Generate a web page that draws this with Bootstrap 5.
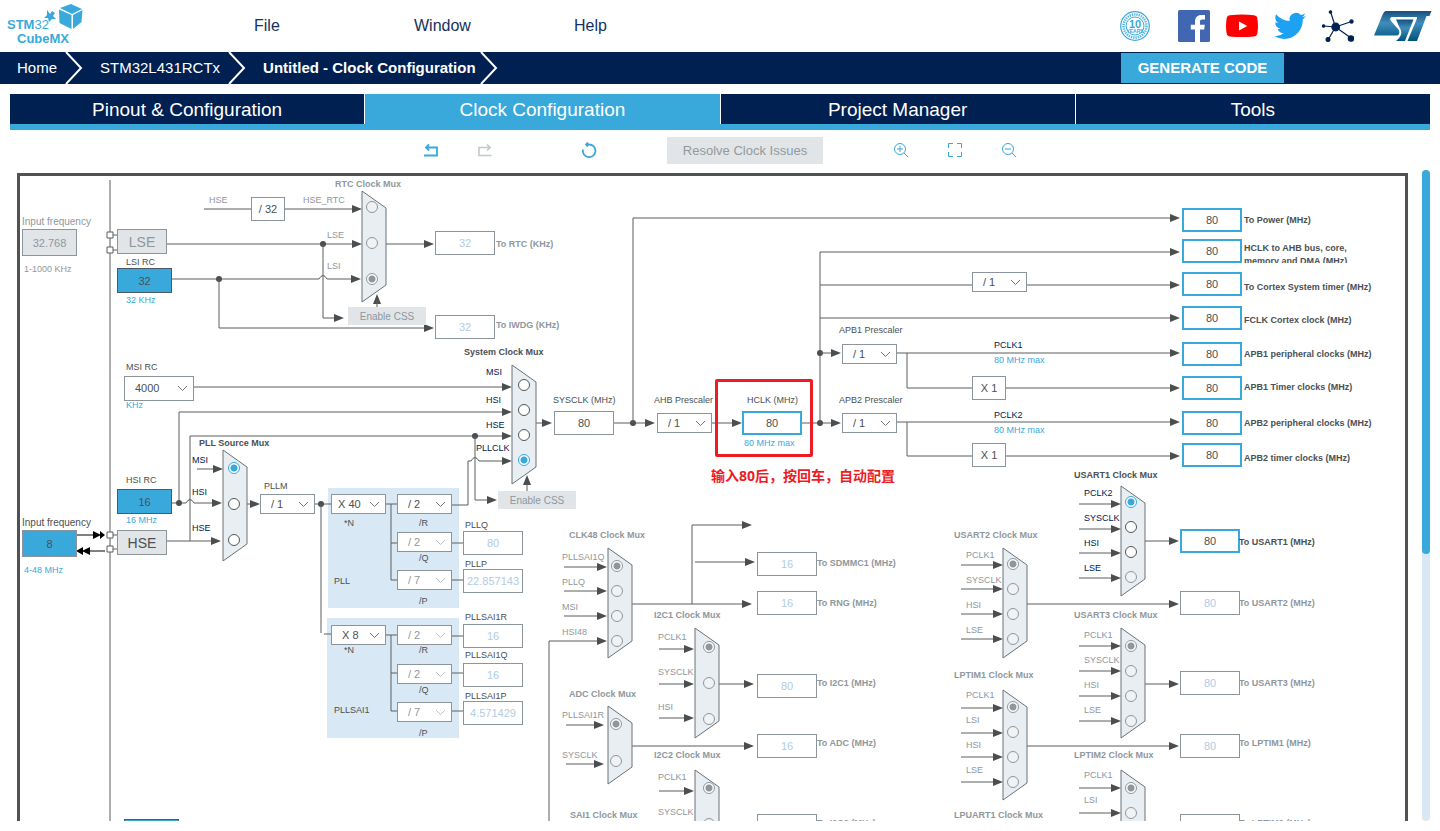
<!DOCTYPE html>
<html lang="en">
<head>
<meta charset="utf-8">
<meta name="viewport" content="width=device-width, initial-scale=1">
<title>STM32CubeMX - Clock Configuration</title>
<link href="https://cdn.jsdelivr.net/npm/bootstrap@5.3.0/dist/css/bootstrap.min.css" rel="stylesheet">
<style>
  :root { --navy:#002052; --sky:#39a9dc; --line:#4f5352; --edge:#8c959c; --pale:#e1e5e8; --wash:#d9e8f5; }
  body { font-family:"Liberation Sans", Arial, sans-serif; color:#4a5053; background:#fff; }
  button, select, input, label, output { font-family:inherit; }

  .topbar { height:52px; }
  .menu-link { width:160px; font-size:16px; line-height:24px; color:#16305f; text-decoration:none; }
  .brand-cell { width:254px; }
  .social { gap:16px; }

  .trail { height:32px; background:var(--navy); color:#fff; font-size:15px; }
  .trail a { color:#fff; text-decoration:none; padding:0 8px 0 17px; }
  .trail a.here { padding-right:4px; }
  .btn-generate { height:30px; width:163px; margin-right:156px; padding:0; border:0; border-radius:0; background:var(--sky); color:#fff; font-size:15px; font-weight:700; }

  .tabs { margin:10px 10px 0; border-bottom:6px solid var(--sky); }
  .tabs button { height:30px; padding:0; border:0; border-left:1px solid #fff; background:var(--navy); color:#fff; font-size:19px; line-height:32px; }
  .tabs button:first-child { border-left:0; }
  .tabs button.active { background:var(--sky); }

  .tools { height:40px; gap:38px; }
  .tools .reset { margin-left:50px; }
  .tools .btn-resolve { margin:0 32px; }
  .tool { width:16px; height:16px; padding:0; border:0; background:none; display:flex; color:var(--sky); }
  .tool:disabled { color:#c4c8cb; }
  .btn-resolve { width:156px; height:27px; padding:2px 0 0; border:0; background:var(--pale); color:#93999e; font-size:13px; }

  .workspace { min-height:0; gap:10px; padding:0 10px 10px 0; }
  .sheet { min-width:0; }
  .frame-edge { position:absolute; inset:3px 4px 0 17px; border:3px solid var(--line); border-bottom:0; }
  .wires { position:absolute; left:0; top:0; }
  .rail { width:8px; border-radius:4px; background:var(--wash); }
  .thumb { height:59%; border-radius:4px; background:var(--sky); }

  .n { position:absolute; margin:0; padding:0; }
  .cap { font-size:9px; line-height:12px; white-space:nowrap; }
  .cap.field { font-size:10px; }
  .cap.b { font-weight:700; }
  .cap.off { color:#8f979c; }
  .cap.blue { color:var(--sky); }
  .cap.navy { color:var(--navy); }
  .cap.two { white-space:normal; line-height:13px; overflow:hidden; }
  .box { border:1px solid var(--edge); border-radius:0; background:#fff; color:#4a5053; font-size:11px; line-height:18px; text-align:center; }
  .box.off { color:#b3cbe3; }
  .box.hot { border:2px solid var(--sky); }
  .box.src { background:var(--sky); border-color:#4a5b66; }
  .box.ext { background:var(--sky); }
  .box.mute { background:var(--pale); color:#8f979c; }
  .box.osc { background:var(--pale); font-size:14px; }
  .box.osc:disabled { color:#8f979c; }
  .css-btn { border:0; background:var(--pale); color:#8f979c; font-size:10px; }
  select.n { appearance:none; border:1px solid var(--edge); border-radius:0; background:#fff; color:#4a5053; font-size:11px; padding-left:10px; opacity:1;
    background-image:url("data:image/svg+xml,%3Csvg xmlns='http://www.w3.org/2000/svg' width='11' height='7' fill='none' stroke='%236c757b'%3E%3Cpath d='M1 1l4.500 4.500L10 1'/%3E%3C/svg%3E"); background-repeat:no-repeat; background-position:right 5px center; }
  select.n:disabled { color:#8f979c; background-image:url("data:image/svg+xml,%3Csvg xmlns='http://www.w3.org/2000/svg' width='11' height='7' fill='none' stroke='%23bcc2c6'%3E%3Cpath d='M1 1l4.500 4.500L10 1'/%3E%3C/svg%3E"); }
  input[type=radio].n { appearance:none; width:12px; height:12px; border:1px solid #4f5658; border-radius:50%; background:#fff; }
  input[type=radio].n:checked { border-color:var(--sky); background:radial-gradient(circle, var(--sky) 3px, #fff 4px); }
  input[type=radio].n:disabled { border-color:#8f979c; background:#f0f2f4; }
  input[type=radio].n:checked:disabled { background:radial-gradient(circle, #8f979c 3px, #fff 4px); }
  .halo { border:3px solid #ec1c24; border-radius:2px; pointer-events:none; }
  .note { font:700 14px/20px "Open Sans", "Noto Sans CJK SC", sans-serif; color:#ec1c24; white-space:nowrap; }
</style>
</head>
<body>
<div class="vh-100 d-flex flex-column overflow-hidden">

  <header class="topbar d-flex align-items-center flex-shrink-0">
    <div class="brand-cell">
      <svg width="90" height="52" viewBox="0 0 90 52" class="d-block" fill="#39a9dc" role="img" aria-label="STM32 CubeMX">
        <g font-family="Liberation Sans, sans-serif" font-size="13">
          <text x="7" y="29"><tspan font-weight="700">STM</tspan>32</text>
          <text x="17" y="43" font-weight="700">CubeMX</text>
        </g>
        <path d="M47 10l3 4 2-3 3 2-2 3 3 3-4 0-3 3-1-4-4 0 3-3z"/>
        <path d="M60 8l11-4 11 5-10 5z"/><path d="M59 9.500l12.500 5.500v14L59.500 23z"/><path d="M82.500 10L73 15v14l8.500-7z"/>
      </svg>
    </div>
    <nav class="d-flex">
      <a class="menu-link" href="#">File</a>
      <a class="menu-link" href="#">Window</a>
      <a class="menu-link" href="#">Help</a>
    </nav>
    <div class="social d-flex align-items-center ms-auto pe-2">
      <svg width="30" height="30" viewBox="0 0 30 30" class="me-2" fill="none" stroke="#39a9dc" role="img" aria-label="10 years longevity commitment">
        <circle cx="15" cy="15" r="14.300" stroke-width="1.200"/><circle cx="15" cy="15" r="11.500" stroke-width="2.600" stroke-dasharray="1.400 .9" opacity=".8"/><circle cx="15" cy="15" r="9"/>
        <g fill="#39a9dc" stroke="none" font-family="Liberation Sans, sans-serif" font-weight="700" text-anchor="middle"><text x="15" y="17" font-size="11">10</text><text x="15" y="22" font-size="5">YEARS</text></g>
      </svg>
      <a href="#" class="d-flex ms-1" aria-label="Facebook"><svg width="32" height="32" viewBox="0 0 32 32"><rect width="32" height="32" rx="1.500" fill="#4267b2"/><path d="M22 32V19.600h4.200l.6-4.800H22v-3.100c0-1.400.4-2.300 2.400-2.300H27V5.100c-.5-.1-2-.2-3.700-.2-3.700 0-6.300 2.300-6.300 6.400v3.500h-4.200v4.800H17V32z" fill="#fff"/></svg></a>
      <a href="#" class="d-flex" aria-label="YouTube"><svg width="32" height="24" viewBox="0 0 32 24"><path d="M4 1.300Q16-.2 28 1.300q3 .5 3.400 3.400 1.200 7 0 14.500-.5 3-3.400 3.300-12 1.200-24 0-3-.4-3.400-3.300-1.200-7 0-14.500Q1 1.700 4 1.300z" fill="#f00"/><path d="M13 7.500l8.300 4.500-8.300 4.600z" fill="#fff"/></svg></a>
      <a href="#" class="d-flex" aria-label="Twitter"><svg width="32" height="32" viewBox="0 0 24 24" fill="#1da1f2"><path d="M23.950 4.570a10 10 0 01-2.820.77 4.960 4.960 0 002.160-2.720c-.95.550-2 .95-3.130 1.180a4.920 4.920 0 00-8.380 4.480C7.690 8.090 4.070 6.130 1.640 3.160a4.820 4.820 0 00-.67 2.470c0 1.710.87 3.210 2.190 4.100a4.900 4.900 0 01-2.230-.62v.06a4.920 4.920 0 003.950 4.830 5 5 0 01-2.210.08 4.940 4.940 0 004.600 3.420A9.870 9.870 0 010 19.540a14 14 0 007.550 2.210c9.050 0 14-7.500 14-13.980 0-.21 0-.42-.02-.63a9.940 9.940 0 002.460-2.550z"/></svg></a>
      <a href="#" class="d-flex" aria-label="Community"><svg width="32" height="32" viewBox="0 0 32 32" fill="#002052" stroke="#002052" stroke-width="1.200"><path d="M13.500 17L8.500 1.800M13.500 17L1.500 16M13.500 17l16-5.500M13.500 17l15.500 11M13.500 17L6 30" fill="none"/><circle cx="13.700" cy="17" r="3.800"/><circle cx="8.500" cy="2" r="1.200"/><circle cx="1.600" cy="16" r="1.200"/><circle cx="29.500" cy="11.500" r="1.600"/><circle cx="29" cy="28.500" r="2.700"/><circle cx="6" cy="29.500" r="1.900"/></svg></a>
      <a href="#" class="d-flex ms-1" aria-label="STMicroelectronics"><svg width="58" height="32" viewBox="0 0 58 32"><defs><linearGradient id="st" x1="0" y1="0" x2="0" y2="1"><stop offset="0" stop-color="#16507f"/><stop offset=".4" stop-color="#3f8dbb"/><stop offset="1" stop-color="#00527d"/></linearGradient></defs>
        <g fill="url(#st)"><path d="M12 1H57.500L55.500 6H52.500L43 31H33.500L43 8.500V7H19c-3 0-3.500 2-2 4l7.500 8.500c1.500 2.500 1 5-1 6H0L8 6Q10 1 12 1z"/>
        <path d="M22 9.500H39.500L31 31H22c6-5 6.500-9 3.500-13.500z"/></g></svg></a>
    </div>
  </header>

  <nav class="trail d-flex align-items-center flex-shrink-0" aria-label="breadcrumb">
    <a href="#">Home</a>
    <svg width="18" height="32" fill="none" stroke="#fff" stroke-width="2"><path d="M1 0l15 16L1 32"/></svg>
    <a href="#">STM32L431RCTx</a>
    <svg width="18" height="32" fill="none" stroke="#fff" stroke-width="2"><path d="M1 0l15 16L1 32"/></svg>
    <a href="#" class="here fw-bold">Untitled - Clock Configuration</a>
    <svg width="18" height="32" fill="none" stroke="#fff" stroke-width="2"><path d="M1 0l15 16L1 32"/></svg>
    <button class="btn-generate ms-auto" type="button">GENERATE CODE</button>
  </nav>

  <div class="tabs d-flex flex-shrink-0" role="tablist">
    <button class="col" type="button" role="tab">Pinout &amp; Configuration</button>
    <button class="col active" type="button" role="tab" aria-selected="true">Clock Configuration</button>
    <button class="col" type="button" role="tab">Project Manager</button>
    <button class="col" type="button" role="tab">Tools</button>
  </div>

  <div class="tools d-flex align-items-center justify-content-center flex-shrink-0">
    <button class="tool" type="button" aria-label="Undo"><svg width="16" height="16" fill="none" stroke="currentColor" stroke-width="1.800"><path d="M1 13.500h13V5.500H3M6 2.500l-3 3 3 3"/></svg></button>
    <button class="tool" type="button" aria-label="Redo" disabled><svg width="16" height="16" fill="none" stroke="currentColor" stroke-width="1.600"><path d="M14.500 13.500H2V5.500h11M10 2.500l3 3-3 3"/></svg></button>
    <button class="tool reset" type="button" aria-label="Reset"><svg width="16" height="16" fill="none" stroke="currentColor" stroke-width="1.800"><path d="M2 7.500A6.300 6.300 0 1 0 8 2.500H5M7 .5L5 2.500l2 2"/></svg></button>
    <button class="btn-resolve" type="button" disabled>Resolve Clock Issues</button>
    <button class="tool" type="button" aria-label="Zoom in"><svg width="16" height="16" fill="none" stroke="currentColor"><circle cx="7" cy="7" r="5.500"/><path d="M11 11l4 4M4 7h6M7 4v6"/></svg></button>
    <button class="tool" type="button" aria-label="Fit"><svg width="16" height="16" fill="none" stroke="currentColor"><path d="M1.500 6V1.500H6M10 1.500h4.500V6M14.500 10v4.500H10M6 14.500H1.500V10"/></svg></button>
    <button class="tool" type="button" aria-label="Zoom out"><svg width="16" height="16" fill="none" stroke="currentColor"><circle cx="7" cy="7" r="5.500"/><path d="M11 11l4 4M4 7h6"/></svg></button>
  </div>

  <main class="workspace d-flex flex-grow-1">
    <div id="sheet" class="sheet position-relative flex-grow-1 overflow-hidden">
      <div class="frame-edge"></div>
      <svg id="wires" class="wires" width="1400" height="700"></svg>
    </div>
    <div class="rail"><div class="thumb"></div></div>
  </main>
</div>

<script src="https://cdn.jsdelivr.net/npm/bootstrap@5.3.0/dist/js/bootstrap.bundle.min.js"></script>
<script>
// Clock tree. Coordinates count from the window's top; the sheet starts below the toolbar.
const TOP = 170;
const sheet = document.getElementById('sheet');
let serial = 0;

function place(tag, cls, x, y, w, h, props) {
  const e = Object.assign(document.createElement(tag), props);
  e.className = 'n ' + cls;
  e.style.left = x + 'px';
  e.style.top = (y - TOP) + 'px';
  if (w) e.style.width = w + 'px';
  if (h) e.style.height = h + 'px';
  sheet.append(e);
  return e;
}
// text centred on the line y; becomes a label when it names a control
function cap(text, x, y, cls, target) {
  const e = place(target ? 'label' : 'span', 'cap ' + (cls || ''), x, y - 6, 0, 0, { textContent: text });
  if (target) e.htmlFor = target.id;
  return e;
}
function value(text, x, y, cls, w, h) {
  const off = /off|mute/.test(cls || '');
  return place('input', 'box ' + (cls || ''), x, y, w || 60, h || 24, { type: 'text', value: text, id: 'v' + (++serial), disabled: off, ariaLabel: 'Frequency' });
}
function pick(text, x, y, off, w, h) {
  const s = place('select', '', x, y, w || 55, h || 20, { id: 's' + (++serial), disabled: !!off, ariaLabel: 'Factor' });
  s.add(new Option(text));
  return s;
}

const art = [];
const wire = d => art.push(`<path d="${d}" transform="translate(0 ${-TOP})"/>`);
const tip = (x, y) => art.push(`<path class="tip" d="M${x} ${y}l-10 -4v8z" transform="translate(0 ${-TOP})"/>`);
const up = (x, y) => art.push(`<path class="tip" d="M${x} ${y}l-4 10h8z" transform="translate(0 ${-TOP})"/>`);
const dot = (x, y) => art.push(`<circle class="tip" cx="${x}" cy="${y - TOP}" r="3"/>`);
const arrow = (x1, x2, y) => { wire(`M${x1} ${y}H${x2 - 8}`); tip(x2, y); };

// a mux: trapezoid, title, and one radio with its name and input arrow per row
function mux(m) {
  const [x, t, b] = m.body, r = x + (m.w || 24);
  art.push(`<path class="mux" d="M${x} ${t}L${r} ${t + 17}V${b - 17}L${x} ${b}z" transform="translate(0 ${-TOP})"/>`);
  cap(m.title, m.at[0], m.at[1], 'b ' + (m.off ? 'off' : ''));
  m.rows.forEach(([name, ty, ry, ay, dead], i) => {
    const radio = place('input', '', m.rx - 6, ry - 6, 0, 0, { type: 'radio', name: m.title, id: 'r' + (++serial), checked: i === (m.sel || 0), disabled: !!(m.off || dead) });
    if (name) cap(name, m.nx[i] || m.nx[0], ty, m.off ? 'off' : 'navy', radio);
    if (ay) arrow(m.from, m.to || x, ay);
  });
}

// PLL backgrounds
art.push('<rect class="pll" x="328" y="318" width="131" height="120"/><rect class="pll" x="327" y="448" width="132" height="120"/>');

// left edge and pins
wire('M110 180V821');

// RTC branch
arrow(204, 362, 209);
arrow(167, 362, 244); dot(323, 244); wire('M323 244V318'); arrow(323, 344, 318);
wire('M172 279H319Q323 272 327 279'); arrow(327, 361, 279); dot(219, 279); wire('M219 279V328'); arrow(219, 434, 328);
arrow(386, 434, 244); up(377, 294); wire('M377 307V300');
// system clock inputs
arrow(194, 512, 387);
wire('M179 503V412'); arrow(179, 512, 412);
wire('M190 541V436'); arrow(190, 512, 436); dot(475, 436);
wire('M475 436V500'); arrow(475, 497, 500);
wire('M172 503H186Q190 496 194 503'); arrow(194, 222, 503); dot(179, 503);
arrow(167, 221, 541);
wire('M247 504H252'); tip(260, 504); wire('M315 504H331'); dot(321, 504); wire('M321 504V633M324 634H331');
wire('M386 504H397M391 504V580M391 543H397M391 580H397M452 543H463M452 580H463');
wire('M386 635H397M391 635V711M391 673H397M391 711H397M452 636H463M452 673H463M452 711H463');
wire('M452 505H468V461H471Q475 454 479 461'); arrow(479, 512, 461);
up(527, 475); wire('M527 491V484');
arrow(536, 552, 423); arrow(614, 655, 423); dot(633, 423); wire('M633 423V218'); arrow(633, 1180, 218);
arrow(712, 742, 423); arrow(802, 841, 423); dot(820, 423); wire('M820 423V252'); dot(820, 353);
[252, 285, 318].forEach(y => arrow(820, 1180, y));
arrow(820, 841, 353);
arrow(897, 1180, 353); wire('M907 353V388'); arrow(907, 1180, 388);
arrow(897, 1180, 422); wire('M907 422V456'); arrow(907, 1180, 456);
// CLK48 and peripheral outputs
wire('M549 821V641'); wire('M692 604V525'); arrow(692, 752, 525); arrow(695, 755, 562); arrow(631, 752, 604);
arrow(718, 754, 684); arrow(631, 754, 746);
arrow(1144, 1179, 541); arrow(1027, 1179, 604); arrow(1144, 1179, 684); arrow(1027, 1179, 746);
// oscillator pins
art.push(`<g transform="translate(0 ${-TOP})"><path d="M113 235H117M113 250H117M113 535H117M113 549H117"/>
  <path class="pin" d="M107 232h6v6h-6zM107 247h6v6h-6zM107 532h6v6h-6zM107 546h6v6h-6z"/>
  <path class="ink" d="M77 535H95M90 551H105"/><path class="inkfill" d="M101 535l-8 -4v8zM105 535l-5 -4v8zM82 551l8 -4v8zM76 551l7 -4v8z"/></g>`);

mux({ title:'RTC Clock Mux', at:[335,184], off:1, body:[362,191,302], rx:372, sel:2, nx:[303,327,327], rows:[['HSE_RTC',200,207],['LSE',235,243],['LSI',266,279]] });
mux({ title:'System Clock Mux', at:[464,352], body:[512,365,484], rx:524, sel:3, nx:[486,486,486,476], rows:[['MSI',372,385],['HSI',400,410],['HSE',425,435],['PLLCLK',448,460]] });
mux({ title:'PLL Source Mux', at:[199,443], body:[223,450,561], rx:234, nx:[192], from:197, rows:[['MSI',460,468,469],['HSI',492,504],['HSE',528,540]] });
mux({ title:'CLK48 Clock Mux', at:[569,535], off:1, body:[608,548,658], rx:617, nx:[562], from:564, to:607, rows:[['PLLSAI1Q',557,566,567],['PLLQ',582,591,591],['MSI',607,616,616],['HSI48',632,641]] });
arrow(549, 607, 641);
mux({ title:'I2C1 Clock Mux', at:[654,615], off:1, body:[695,628,738], rx:709, nx:[658], from:659, to:694, rows:[['PCLK1',637,647,649],['SYSCLK',672,683,684],['HSI',707,719,718]] });
mux({ title:'ADC Clock Mux', at:[569,694], off:1, body:[608,706,784], rx:616, nx:[562], from:566, to:604, rows:[['PLLSAI1R',715,724,725],['SYSCLK',755,761,764]] });
mux({ title:'I2C2 Clock Mux', at:[654,755], off:1, body:[695,770,880], rx:709, nx:[658], from:659, to:694, rows:[['PCLK1',777,788,791],['SYSCLK',812,824]] });
const quad = (title, at, x, nx, top, names, ty, ry, ay, on) => mux({ title, at, off:!on, body:[x, top, top + 110], rx:x + 10, nx:[nx], from:x - 42, to:x,
  rows:names.map((n, i) => [n, ty + 25 * i, ry + 25 * i, ay[i], i === 3]) });
quad('USART1 Clock Mux', [1074,475], 1121, 1084, 486, ['PCLK2','SYSCLK','HSI','LSE'], 493, 502, [504,529,553,578], true);
quad('USART2 Clock Mux', [954,535], 1003, 966, 548, ['PCLK1','SYSCLK','HSI','LSE'], 555, 564, [565,589,614,639]);
quad('USART3 Clock Mux', [1074,615], 1121, 1084, 628, ['PCLK1','SYSCLK','HSI','LSE'], 635, 646, [646,671,696,721]);
quad('LPTIM1 Clock Mux', [954,675], 1003, 966, 690, ['PCLK1','LSI','HSI','LSE'], 695, 707, [708,733,757,782]);
quad('LPTIM2 Clock Mux', [1074,755], 1121, 1084, 770, ['PCLK1','LSI'], 775, 788, [788,813]);
cap('SAI1 Clock Mux', 570, 815, 'b off');
cap('LPUART1 Clock Mux', 954, 815, 'b off');

// sources
cap('HSE', 209, 200, 'off');
place('output', 'box', 251, 197, 34, 24, { textContent:'/ 32' }).style.lineHeight = '22px';
cap('Input frequency', 22, 222, 'off field', value('32.768', 22, 229, 'mute', 55, 27)); cap('1-1000 KHz', 24, 269, 'off');
cap('Input frequency', 22, 523, 'field', value('8', 22, 530, 'ext', 55, 27)); cap('4-48 MHz', 24, 570, 'blue');
place('button', 'box osc', 117, 229, 50, 25, { type:'button', textContent:'LSE', disabled:true });
place('button', 'box osc', 117, 530, 50, 25, { type:'button', textContent:'HSE' });
cap('LSI RC', 126, 262, '', value('32', 117, 268, 'src', 55, 25)); cap('32 KHz', 126, 300, 'blue');
cap('HSI RC', 126, 480, '', value('16', 117, 489, 'src', 55, 25)); cap('16 MHz', 126, 520, 'blue');
cap('KHz', 126, 405, 'blue'); cap('MSI RC', 126, 367, '', pick('4000', 124, 376, 0, 70, 25));
value('', 124, 819, 'src', 55, 25);
place('button', 'css-btn', 348, 307, 78, 18, { type:'button', textContent:'Enable CSS', disabled:true });
place('button', 'css-btn', 498, 491, 78, 18, { type:'button', textContent:'Enable CSS', disabled:true });

// prescalers and multipliers
cap('PLLM', 264, 486, '', pick('/ 1', 260, 494));
cap('AHB Prescaler', 654, 400, '', pick('/ 1', 657, 413));
cap('APB1 Prescaler', 839, 330, '', pick('/ 1', 842, 344));
cap('APB2 Prescaler', 839, 400, '', pick('/ 1', 842, 413));
pick('/ 1', 972, 272);
[['*N',344,523,'X 40',331,494,0],['/R',419,523,'/ 2',397,494,0],['/Q',419,558,'/ 2',397,532,1],['/P',419,601,'/ 7',397,570,1],
 ['*N',344,650,'X 8',331,625,0],['/R',419,650,'/ 2',397,625,1],['/Q',419,690,'/ 2',397,664,1],['/P',419,733,'/ 7',397,702,1]]
 .forEach(([t, x, y, v, sx, sy, off]) => { const s = pick(v, sx, sy, off); if (v === 'X 40') s.style.paddingLeft = '6px'; cap(t, x, y, '', s); });
cap('PLL', 334, 581); cap('PLLSAI1', 334, 710);
[['PLLQ',525,'80',531],['PLLP',564,'22.857143',569],['PLLSAI1R',617,'16',624],['PLLSAI1Q',655,'16',663],['PLLSAI1P',696,'4.571429',701]]
 .forEach(([t, ty, v, y]) => cap(t, 465, ty, '', value(v, 463, y, 'off')));
[376, 443].forEach(y => { place('output', 'box', 972, y, 34, 24, { textContent:'X 1' }).style.lineHeight = '22px'; });
cap('PCLK1', 994, 345, 'navy'); cap('80 MHz max', 994, 360, 'blue'); cap('PCLK2', 994, 415, 'navy'); cap('80 MHz max', 994, 430, 'blue');

// frequencies
cap('SYSCLK (MHz)', 553, 400, '', value('80', 554, 411));
cap('HCLK (MHz)', 747, 400, '', value('80', 742, 411, 'hot')); cap('80 MHz max', 744, 443, 'blue');
[['To Power (MHz)',220,208],['To Cortex System timer (MHz)',287,272],['FCLK Cortex clock (MHz)',320,306],['APB1 peripheral clocks (MHz)',354,342],
 ['APB1 Timer clocks (MHz)',387,376],['APB2 peripheral clocks (MHz)',423,411],['APB2 timer clocks (MHz)',458,443]]
 .forEach(([t, ty, y]) => cap(t, 1244, ty, 'b', value('80', 1182, y, 'hot')));
const ahb = cap('HCLK to AHB bus, core, memory and DMA (MHz)', 1244, 248, 'b two', value('80', 1182, 239, 'hot'));
ahb.style.width = '120px'; ahb.style.height = '21px';
[['To RTC (KHz)',496,244,'32',435,231],['To IWDG (KHz)',496,325,'32',435,315],['To SDMMC1 (MHz)',817,563,'16',757,552],['To RNG (MHz)',817,603,'16',757,591],
 ['To I2C1 (MHz)',817,683,'80',757,674],['To ADC (MHz)',817,743,'16',757,734],['To I2C2 (MHz)',817,823,'80',757,814],
 ['To USART2 (MHz)',1239,603,'80',1180,591],['To USART3 (MHz)',1239,683,'80',1180,671],['To LPTIM1 (MHz)',1239,743,'80',1180,734],['To LPTIM2 (MHz)',1239,823,'80',1180,814]]
 .forEach(([t, x, ty, v, bx, by]) => cap(t, x, ty, 'b off', value(v, bx, by, 'off')));
cap('To USART1 (MHz)', 1239, 542, 'b', value('80', 1180, 529, 'hot'));

place('div', 'halo', 715, 379, 98, 78);
place('span', 'note', 711, 466, 0, 0, { textContent:'输入80后，按回车，自动配置' });

document.getElementById('wires').innerHTML = `<style>
  #wires path { fill:none; stroke:#5a5e5e; stroke-width:1; }
  #wires .tip { fill:#4a4e4e; stroke:none; }
  #wires .inkfill { fill:#000; stroke:none; } #wires .ink { stroke:#000; }
  #wires .mux { fill:#e9eef2; stroke:#6a7276; } #wires .pin { fill:#fff; }
  #wires .pll { fill:#d9e8f5; }
</style>` + art.join('');
</script>
</body>
</html>
